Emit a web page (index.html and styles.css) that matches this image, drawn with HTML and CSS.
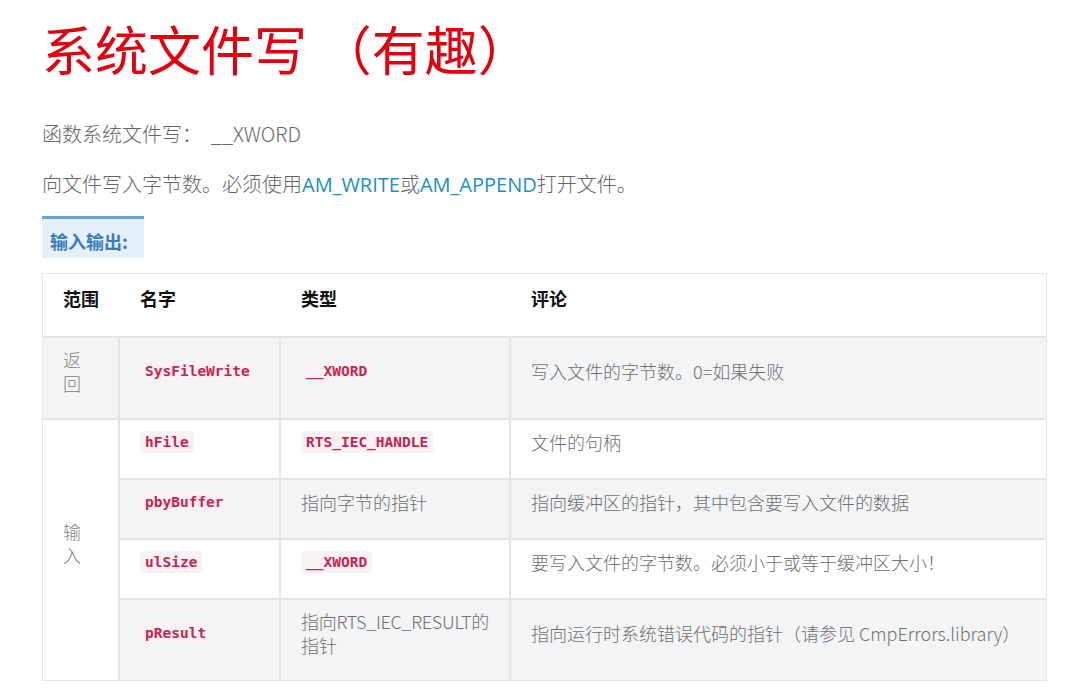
FILE: index.html
```html
<!DOCTYPE html>
<html lang="zh-CN">
<head>
<meta charset="utf-8">
<title>系统文件写</title>
<link rel="stylesheet" href="styles.css">
</head>
<body>
<main class="page">
  <h1 class="title">系统文件写 （有趣）</h1>
  <p class="para">函数系统文件写：&nbsp;&nbsp;__XWORD</p>
  <p class="para">向文件写入字节数。必须使用<a class="link">AM_WRITE</a>或<a class="link">AM_APPEND</a>打开文件。</p>
  <div class="section-tag">输入输出:</div>
  <table class="io-table">
    <colgroup>
      <col class="c-scope">
      <col class="c-name">
      <col class="c-type">
      <col class="c-comment">
    </colgroup>
    <thead>
      <tr>
        <th>范围</th>
        <th>名字</th>
        <th>类型</th>
        <th>评论</th>
      </tr>
    </thead>
    <tbody>
      <tr class="shade">
        <td class="scope multi"><p>返回</p></td>
        <td><p><code>SysFileWrite</code></p></td>
        <td><p><code>__XWORD</code></p></td>
        <td class="last"><p>写入文件的字节数。0=如果失败</p></td>
      </tr>
      <tr>
        <td class="scope multi plain" rowspan="4"><p>输入</p></td>
        <td><p><code>hFile</code></p></td>
        <td><p><code>RTS_IEC_HANDLE</code></p></td>
        <td class="last"><p>文件的句柄</p></td>
      </tr>
      <tr class="shade">
        <td><p><code>pbyBuffer</code></p></td>
        <td><p>指向字节的指针</p></td>
        <td class="last"><p>指向缓冲区的指针，其中包含要写入文件的数据</p></td>
      </tr>
      <tr>
        <td><p><code>ulSize</code></p></td>
        <td><p><code>__XWORD</code></p></td>
        <td class="last"><p>要写入文件的字节数。必须小于或等于缓冲区大小！</p></td>
      </tr>
      <tr class="shade">
        <td><p><code>pResult</code></p></td>
        <td class="multi"><p><span class="nowrap">指向RTS_IEC_RESULT的</span>指针</p></td>
        <td class="last"><p>指向运行时系统错误代码的指针（请参见 CmpErrors.library）</p></td>
      </tr>
    </tbody>
  </table>
</main>
</body>
</html>
```

FILE: styles.css
```css
html, body {
  margin: 0;
  padding: 0;
  background: #ffffff;
}

body {
  font-family: "Open Sans", "Noto Sans CJK SC", sans-serif;
  font-weight: 300;
  color: #666666;
}

.page {
  padding: 16px 30px 0 42px;
}

.title {
  margin: 0;
  font-family: "Noto Sans CJK SC", sans-serif;
  font-size: 53px;
  line-height: 64px;
  font-weight: 400;
  color: #e2000f;
}

.para {
  margin: 0;
  font-family: "Noto Sans CJK SC", sans-serif;
  font-size: 20px;
  line-height: 30px;
  font-weight: 300;
  color: #666666;
}

.title + .para {
  margin-top: 39px;
}

.para + .para {
  margin-top: 20px;
}

.link {
  color: #1a8fd0;
  font-family: "Open Sans", "Noto Sans CJK SC", sans-serif;
  font-weight: 400;
}

.section-tag {
  display: inline-block;
  margin-top: 16px;
  padding: 10px 16px 5px 8px;
  border-top: 3px solid #6aa2d6;
  background: #e6f0fa;
  color: #3a7bbd;
  font-family: "Noto Sans CJK SC", sans-serif;
  font-size: 18px;
  line-height: 24px;
  font-weight: 700;
}

.io-table {
  margin-top: 15px;
  width: 1005px;
  table-layout: fixed;
  border-collapse: separate;
  border-spacing: 0;
  border: 1px solid #e6e7e9;
  font-family: "Noto Sans CJK SC", sans-serif;
}

.c-scope { width: 77px; }
.c-name { width: 161px; }
.c-type { width: 230px; }

.io-table th {
  text-align: left;
  padding: 12px 20px 26px;
  font-size: 18px;
  line-height: 24px;
  font-weight: 700;
  color: #111111;
  border-bottom: 2px solid #e3e4e6;
}

.io-table td {
  padding: 11px 20px;
  vertical-align: middle;
  border-right: 2px solid #e3e4e6;
  border-top: 2px solid #e3e4e6;
  font-size: 18px;
  line-height: 22px;
  font-weight: 300;
  color: #707070;
}

.io-table td.multi {
  padding-top: 9px;
  padding-bottom: 9px;
  line-height: 24px;
}

.io-table tbody tr:first-child td {
  border-top: 0;
}

.io-table td.last {
  border-right: 0;
}

.io-table td p {
  margin: 0 0 14px;
}

.io-table tr.shade td {
  background: #f3f4f6;
}

.io-table td.scope {
  color: #808080;
}

.io-table td.plain {
  background: #ffffff;
}

.nowrap {
  white-space: nowrap;
  letter-spacing: -0.3px;
}

code {
  display: inline-block;
  vertical-align: top;
  font-family: "DejaVu Sans Mono", "Liberation Mono", monospace;
  font-size: 14.5px;
  line-height: 17px;
  font-weight: 700;
  color: #c7254e;
  background: #f9f2f4;
  padding: 3px 5px 2px;
  margin: 0;
  border-radius: 2px;
}
```
